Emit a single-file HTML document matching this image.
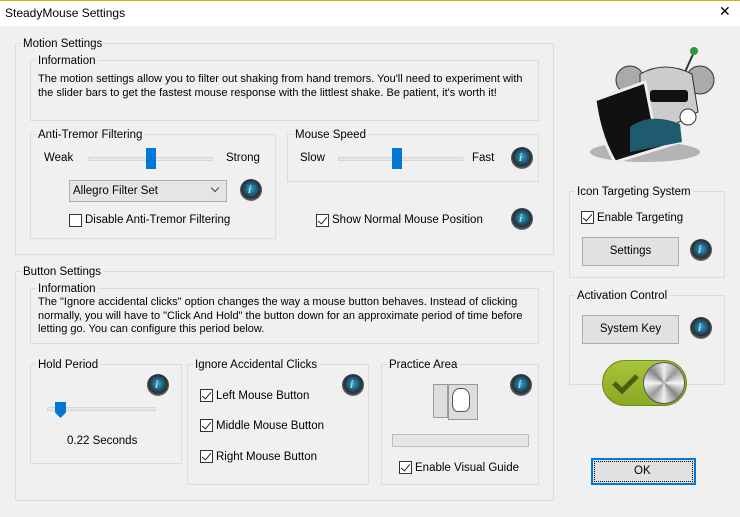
<!DOCTYPE html>
<html><head><style>
*{box-sizing:border-box}
body{margin:0;width:740px;height:517px;background:#f0f0f0;font-family:"Liberation Sans",sans-serif;font-size:11.5px;color:#000;position:relative;overflow:hidden}
.a{position:absolute}
.g{position:absolute;border:1px solid #dcdcdc}
.gl{position:absolute;background:#f0f0f0;padding:0 2px;white-space:nowrap;line-height:13px}
.t{position:absolute;white-space:nowrap;line-height:13px}
.p{font-size:11px}
.cb{position:absolute;width:13px;height:13px;border:1px solid #333;background:#fff}
.cb.c::after{content:"";position:absolute;left:3px;top:0px;width:4px;height:8px;border:solid #222;border-width:0 1.5px 1.5px 0;transform:rotate(40deg)}
.btn{position:absolute;background:#e1e1e1;border:1px solid #adadad;text-align:center}
.info{position:absolute;width:22px;height:22px;border-radius:50%;background:radial-gradient(circle at 50% 45%,#3aa0c8 0,#1d5c78 35%,#2b2f33 55%,#777 75%,#bbb 100%)}
.info::after{content:"i";position:absolute;left:8px;top:3px;color:#9de;font-style:italic;font-weight:bold;font-size:12px;font-family:"Liberation Serif",serif}
.track{position:absolute;height:4px;background:#e7e7e7;border:1px solid #d6d6d6}
.thumb{position:absolute;background:#0078d7}
</style></head><body>
<div class="a" style="left:0;top:0;width:740px;height:26px;background:#fff;border-top:1px solid #e8a317"></div>
<div class="t" style="left:5px;top:7px;font-size:12px">SteadyMouse Settings</div>
<div class="t" style="left:719px;top:5px;font-size:14px">✕</div>

<div class="g" style="left:15px;top:43px;width:539px;height:212px"></div><div class="gl" style="left:21px;top:38px">Motion Settings</div>
<div class="g" style="left:30px;top:60px;width:509px;height:61px"></div><div class="gl" style="left:36px;top:55px">Information</div>
<div class="t p" style="left:38px;top:73px;line-height:13.5px">The motion settings allow you to filter out shaking from hand tremors. You'll need to experiment with<br>the slider bars to get the fastest mouse response with the littlest shake. Be patient, it's worth it!</div>

<div class="g" style="left:30px;top:134px;width:246px;height:105px"></div><div class="gl" style="left:36px;top:129px">Anti-Tremor Filtering</div>
<div class="t" style="left:44px;top:152px">Weak</div>
<div class="track" style="left:88px;top:157px;width:125px"></div>
<div class="thumb" style="left:146px;top:148px;width:10px;height:21px"></div>
<div class="t" style="left:226px;top:152px">Strong</div>
<div class="a" style="left:69px;top:180px;width:158px;height:22px;background:#e5e5e5;border:1px solid #adadad"></div>
<div class="t" style="left:73px;top:185px">Allegro Filter Set</div>
<div class="a" style="left:212px;top:185px;width:6px;height:6px;border:solid #444;border-width:0 1px 1px 0;transform:rotate(45deg)"></div>
<div class="info" style="left:240px;top:179px"></div>
<div class="cb" style="left:69px;top:214px"></div><div class="t" style="left:85px;top:214px">Disable Anti-Tremor Filtering</div>

<div class="g" style="left:287px;top:134px;width:252px;height:48px"></div><div class="gl" style="left:293px;top:129px">Mouse Speed</div>
<div class="t" style="left:300px;top:152px">Slow</div>
<div class="track" style="left:338px;top:157px;width:125px"></div>
<div class="thumb" style="left:392px;top:148px;width:10px;height:21px"></div>
<div class="t" style="left:472px;top:152px">Fast</div>
<div class="info" style="left:511px;top:147px"></div>
<div class="cb c" style="left:316px;top:214px"></div><div class="t" style="left:332px;top:214px">Show Normal Mouse Position</div>
<div class="info" style="left:511px;top:208px"></div>

<div class="g" style="left:15px;top:271px;width:539px;height:230px"></div><div class="gl" style="left:21px;top:266px">Button Settings</div>
<div class="g" style="left:30px;top:288px;width:509px;height:56px"></div><div class="gl" style="left:36px;top:283px">Information</div>
<div class="t p" style="left:38px;top:296px;line-height:13.5px">The "Ignore accidental clicks" option changes the way a mouse button behaves. Instead of clicking<br>normally, you will have to "Click And Hold" the button down for an approximate period of time before<br>letting go. You can configure this period below.</div>

<div class="g" style="left:30px;top:364px;width:152px;height:100px"></div><div class="gl" style="left:36px;top:359px">Hold Period</div>
<div class="info" style="left:147px;top:374px"></div>
<div class="track" style="left:47px;top:407px;width:109px"></div>
<div class="thumb" style="left:55px;top:402px;width:11px;height:16px;clip-path:polygon(0 0,100% 0,100% 65%,50% 100%,0 65%)"></div>
<div class="t" style="left:67px;top:435px">0.22 Seconds</div>

<div class="g" style="left:187px;top:364px;width:182px;height:121px"></div><div class="gl" style="left:193px;top:359px">Ignore Accidental Clicks</div>
<div class="info" style="left:342px;top:374px"></div>
<div class="cb c" style="left:200px;top:389px"></div><div class="t" style="left:216px;top:390px">Left Mouse Button</div>
<div class="cb c" style="left:200px;top:419px"></div><div class="t" style="left:216px;top:420px">Middle Mouse Button</div>
<div class="cb c" style="left:200px;top:450px"></div><div class="t" style="left:216px;top:451px">Right Mouse Button</div>

<div class="g" style="left:381px;top:364px;width:158px;height:121px"></div><div class="gl" style="left:387px;top:359px">Practice Area</div>
<div class="info" style="left:510px;top:374px"></div>
<div class="a" style="left:433px;top:384px;width:15px;height:34px;background:#ddd;border:1px solid #999"></div>
<div class="a" style="left:448px;top:384px;width:30px;height:36px;background:#ddd;border:1px solid #999"></div>
<div class="a" style="left:452px;top:388px;width:18px;height:24px;background:#fff;border:1px solid #555;border-radius:40% 40% 30% 30%"></div>
<div class="a" style="left:392px;top:434px;width:137px;height:13px;background:#e6e6e6;border:1px solid #bcbcbc"></div>
<div class="cb c" style="left:399px;top:461px"></div><div class="t" style="left:415px;top:462px">Enable Visual Guide</div>

<svg class="a" style="left:570px;top:42px" width="150" height="130" viewBox="0 0 150 130">
<ellipse cx="75" cy="110" rx="55" ry="10" fill="#000" opacity=".25"/>
<line x1="115" y1="30" x2="124" y2="10" stroke="#333" stroke-width="2"/><circle cx="124" cy="9" r="4" fill="#2a9a3a"/>
<circle cx="60" cy="38" r="14" fill="#aaa" stroke="#333"/><circle cx="130" cy="38" r="14" fill="#aaa" stroke="#333"/>
<path d="M70 32 Q95 18 122 32 L128 70 L90 90 L70 70Z" fill="#ccc" stroke="#333"/>
<path d="M25 58 L75 40 L85 90 L105 90 L110 100 L45 120 Q30 95 25 58Z" fill="#111" stroke="#eee" stroke-width="3"/>
<path d="M60 85 Q80 70 110 82 L112 100 L60 110Z" fill="#1f5b6f"/>
<rect x="80" y="48" width="38" height="12" rx="3" fill="#111"/>
<circle cx="118" cy="75" r="8" fill="#fff" stroke="#333"/>
</svg>

<div class="g" style="left:569px;top:191px;width:156px;height:87px"></div><div class="gl" style="left:575px;top:186px">Icon Targeting System</div>
<div class="cb c" style="left:581px;top:211px"></div><div class="t" style="left:597px;top:212px">Enable Targeting</div>
<div class="btn" style="left:582px;top:237px;width:97px;height:29px;line-height:27px">Settings</div>
<div class="info" style="left:690px;top:239px"></div>

<div class="g" style="left:569px;top:295px;width:156px;height:90px"></div><div class="gl" style="left:575px;top:290px">Activation Control</div>
<div class="btn" style="left:582px;top:315px;width:97px;height:29px;line-height:27px">System Key</div>
<div class="info" style="left:690px;top:317px"></div>
<div class="a" style="left:602px;top:360px;width:85px;height:46px;border-radius:23px;background:linear-gradient(#a8c43a,#8aa823);border:1px solid #6e8a1a"></div>
<svg class="a" style="left:610px;top:370px" width="32" height="26"><path d="M4 13 L12 21 L27 6" fill="none" stroke="#4d5e12" stroke-width="5"/></svg>
<div class="a" style="left:643px;top:362px;width:42px;height:42px;border-radius:50%;background:conic-gradient(#eee,#999,#f5f5f5,#888,#eee,#999,#f5f5f5,#888,#eee);border:1px solid #555"></div>

<div class="a" style="left:591px;top:458px;width:105px;height:27px;background:#e1e1e1;border:2px solid #0078d7"></div>
<div class="a" style="left:594px;top:461px;width:99px;height:21px;border:1px dotted #000"></div>
<div class="t" style="left:634px;top:465px">OK</div>
</body></html>
